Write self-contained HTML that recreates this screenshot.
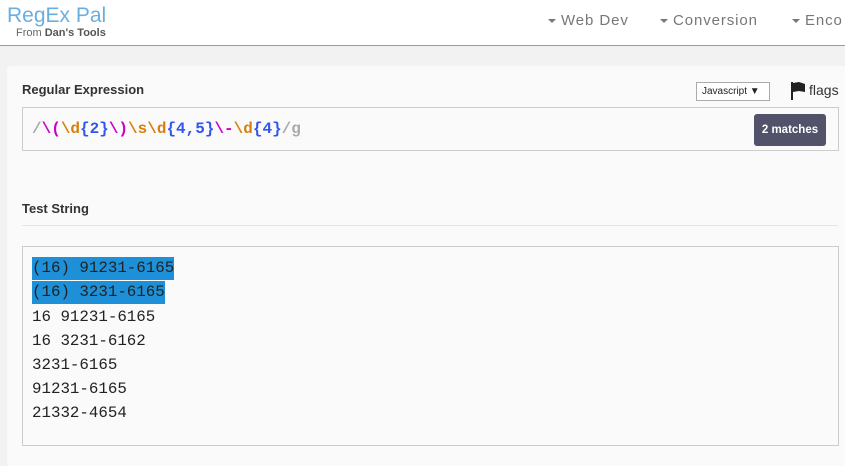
<!DOCTYPE html>
<html><head><meta charset="utf-8"><style>
body{margin:0;width:845px;height:463px;overflow:hidden;background:#f2f2f2;font-family:"Liberation Sans",sans-serif;position:relative}
.hdr{position:absolute;left:0;top:0;width:845px;height:45px;background:#fff;border-bottom:1px solid #5aaee8}
.logo{position:absolute;left:7px;top:4px;font-size:21px;color:#6aaee0}
.from{position:absolute;left:16px;top:27px;font-size:11px;color:#666}
.from b{color:#555}
.nav{position:absolute;top:12px;font-size:15px;color:#777;letter-spacing:.9px;white-space:nowrap}
.nav:before{content:"";display:inline-block;border:4px solid transparent;border-top:4px solid #777;border-bottom:0;margin-right:5px;vertical-align:middle}
.card{position:absolute;left:7px;top:66px;width:845px;height:400px;background:#fafafa;border-radius:3px}
.lbl{position:absolute;left:22px;font-size:13px;font-weight:bold;color:#333}
.box{position:absolute;left:22px;width:815px;background:#fafafa;border:1px solid #ccc}
.mono{font-family:"Liberation Mono",monospace;font-size:16px}
.o{color:#d7800c}.m{color:#cc00cc}.b{color:#3355ee}.g{color:#aaa}
.sel{position:absolute;left:696px;top:82px;width:74px;height:19px;border:1px solid #aaa;background:#fff;font-size:10px;color:#222;box-sizing:border-box;padding:3px 0 0 5px}
.btn{position:absolute;left:754px;top:114px;width:72px;height:32px;background:#52526a;border-radius:3px;color:#fff;font-size:11.5px;font-weight:bold;text-align:center;line-height:32px}
.line{height:24px;line-height:24px;color:#222}
.hl{background:#1e90d8;display:inline-block;height:23px;line-height:23px;vertical-align:top}
</style></head><body>
<div class="hdr">
<div class="logo">RegEx Pal</div>
<div class="from">From <b>Dan's Tools</b></div>
<div class="nav" style="left:548px">Web Dev</div>
<div class="nav" style="left:660px">Conversion</div>
<div class="nav" style="left:792px">Enco</div>
</div>
<div class="card"></div>
<div class="lbl" style="top:82px">Regular Expression</div>
<div class="sel">Javascript ▼</div>
<svg style="position:absolute;left:790px;top:82px" width="16" height="18"><rect x="1" y="0" width="2" height="18" fill="#222"/><path d="M3 1 L9 0 L15 2 L15 10 L9 9 L3 10Z" fill="#222"/></svg>
<div style="position:absolute;left:809px;top:82px;font-size:14px;color:#333">flags</div>
<div class="box" style="top:107px;height:42px"><div class="mono" style="position:absolute;left:9px;top:12px;font-weight:bold"><span class="g">/</span><span class="m">\(</span><span class="o">\d</span><span class="b">{2}</span><span class="m">\)</span><span class="o">\s\d</span><span class="b">{4,5}</span><span class="m">\-</span><span class="o">\d</span><span class="b">{4}</span><span class="g">/g</span></div></div>
<div class="btn">2 matches</div>
<div class="lbl" style="top:201px">Test String</div>
<div style="position:absolute;left:22px;top:225px;width:816px;height:1px;background:#e5e5e5"></div>
<div class="box" style="top:246px;height:198px"><div class="mono" style="position:absolute;left:9px;top:10px;font-size:15.8px">
<div class="line"><span class="hl">(16) 91231-6165</span></div>
<div class="line"><span class="hl">(16) 3231-6165</span></div>
<div class="line">16 91231-6165</div>
<div class="line">16 3231-6162</div>
<div class="line">3231-6165</div>
<div class="line">91231-6165</div>
<div class="line">21332-4654</div>
</div></div>
</body></html>
